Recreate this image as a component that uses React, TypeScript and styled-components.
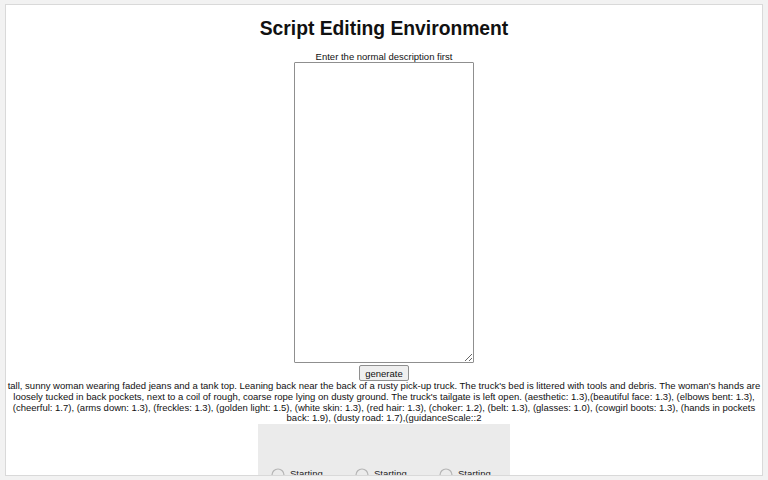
import styled, { createGlobalStyle } from "styled-components";

const GlobalStyle = createGlobalStyle`
  html, body {
    margin: 0;
    padding: 0;
    height: 100%;
    background: #f2f2f2;
  }
  body {
    font-family: "Liberation Sans", Arial, sans-serif;
    color: #111;
  }
`;

const Page = styled.div`
  padding: 4px 5px 0 5px;
  height: 480px;
  box-sizing: border-box;
`;

const Panel = styled.div`
  height: 472px;
  box-sizing: border-box;
  background: #fff;
  border: 1px solid #d9d9d9;
  overflow: hidden;
  display: flex;
  flex-direction: column;
  align-items: center;
  text-align: center;

  & > * {
    flex: none;
  }
`;

const Title = styled.h1`
  margin: 12px 0 0 0;
  font-size: 19.3px;
  line-height: 24px;
  font-weight: bold;
`;

const Label = styled.label`
  margin-top: 10px;
  font-size: 9.5px;
  line-height: 11px;
`;

const Editor = styled.textarea`
  width: 180px;
  height: 301px;
  box-sizing: border-box;
  border: 1px solid #8f8f8f;
  border-radius: 1px;
  margin: 0;
  resize: vertical;
  font-family: inherit;
`;

const GenerateButton = styled.button`
  margin-top: 2px;
  height: 16px;
  padding: 0 5px;
  font-family: inherit;
  font-size: 9.5px;
  color: #111;
  background: #efefef;
  border: 1px solid #8f8f8f;
  border-radius: 2px;
`;

const Prompt = styled.p`
  margin: 0;
  padding: 0 3px;
  font-size: 9.5px;
  line-height: 10.8px;
  white-space: nowrap;
`;

const StatusBox = styled.div`
  width: 252px;
  height: 80px;
  background: #ebebeb;
  display: grid;
  grid-template-columns: repeat(3, 1fr);
  padding-top: 44px;
  box-sizing: border-box;
`;

const StatusItem = styled.div`
  display: flex;
  align-items: flex-start;
  gap: 5px;
  padding-left: 13px;
  font-size: 9.5px;
  line-height: 12px;
  color: #222;
`;

const Spinner = ({ active }: { active?: boolean }) => (
  <svg width="14" height="14" viewBox="0 0 14 14">
    <circle cx="7" cy="7" r="6" fill="none" stroke="#b5b5b5" strokeWidth="1.2" />
    {active && <path d="M7 7 L7 13" stroke="#333" strokeWidth="1.4" />}
  </svg>
);

const promptLines = [
  "tall, sunny woman wearing faded jeans and a tank top. Leaning back near the back of a rusty pick-up truck. The truck's bed is littered with tools and debris. The woman's hands are",
  "loosely tucked in back pockets, next to a coil of rough, coarse rope lying on dusty ground. The truck's tailgate is left open. (aesthetic: 1.3),(beautiful face: 1.3), (elbows bent: 1.3),",
  "(cheerful: 1.7), (arms down: 1.3), (freckles: 1.3), (golden light: 1.5), (white skin: 1.3), (red hair: 1.3), (choker: 1.2), (belt: 1.3), (glasses: 1.0), (cowgirl boots: 1.3), (hands in pockets",
  "back: 1.9), (dusty road: 1.7),(guidanceScale::2",
];

export default function App() {
  return (
    <>
      <GlobalStyle />
      <Page>
        <Panel>
          <Title>Script Editing Environment</Title>
          <Label htmlFor="desc">Enter the normal description first</Label>
          <Editor id="desc" />
          <GenerateButton>generate</GenerateButton>
          <Prompt>
            {promptLines.map((line, i) => (
              <span key={i}>
                {line}
                {i < promptLines.length - 1 && <br />}
              </span>
            ))}
          </Prompt>
          <StatusBox>
            <StatusItem>
              <Spinner />
              Starting
            </StatusItem>
            <StatusItem>
              <Spinner />
              Starting
            </StatusItem>
            <StatusItem>
              <Spinner active />
              Starting
            </StatusItem>
          </StatusBox>
        </Panel>
      </Page>
    </>
  );
}
